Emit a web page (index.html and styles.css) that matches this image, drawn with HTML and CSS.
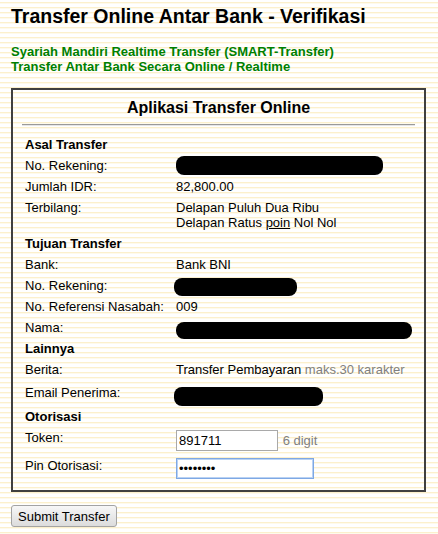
FILE: index.html
```html
<!DOCTYPE html>
<html>
<head>
<meta charset="utf-8">
<title>Transfer Online Antar Bank - Verifikasi</title>
<link rel="stylesheet" href="styles.css">
</head>
<body>
<h1 class="title">Transfer Online Antar Bank - Verifikasi</h1>
<p class="subtitle">Syariah Mandiri Realtime Transfer (SMART-Transfer)<br>Transfer Antar Bank Secara Online / Realtime</p>
<div class="panel">
  <h2 class="panel-title">Aplikasi Transfer Online</h2>
  <hr class="rule">
  <table class="form">
    <tr><td colspan="2" class="section">Asal Transfer</td></tr>
    <tr><td class="label">No. Rekening:</td><td class="value"><span class="redact r1"></span></td></tr>
    <tr><td class="label">Jumlah IDR:</td><td class="value">82,800.00</td></tr>
    <tr><td class="label">Terbilang:</td><td class="value">Delapan Puluh Dua Ribu<br>Delapan Ratus <u>poin</u> Nol Nol</td></tr>
    <tr><td colspan="2" class="section">Tujuan Transfer</td></tr>
    <tr><td class="label">Bank:</td><td class="value">Bank BNI</td></tr>
    <tr><td class="label">No. Rekening:</td><td class="value"><span class="redact r2"></span></td></tr>
    <tr><td class="label">No. Referensi Nasabah:</td><td class="value">009</td></tr>
    <tr><td class="label">Nama:</td><td class="value"><span class="redact r3"></span></td></tr>
    <tr><td colspan="2" class="section">Lainnya</td></tr>
    <tr><td class="label">Berita:</td><td class="value">Transfer Pembayaran <span class="hint">maks.30 karakter</span></td></tr>
    <tr class="email-row"><td class="label">Email Penerima:</td><td class="value"><span class="redact r4"></span></td></tr>
    <tr><td colspan="2" class="section">Otorisasi</td></tr>
    <tr class="input-row"><td class="label">Token:</td><td class="value"><input class="field token" type="text" value="891711"> <span class="hint field-hint">6 digit</span></td></tr>
    <tr class="input-row"><td class="label">Pin Otorisasi:</td><td class="value"><input class="field pin" type="password" value="12345678"></td></tr>
  </table>
</div>
<button class="submit" type="button">Submit Transfer</button>
</body>
</html>
```

FILE: styles.css
```css
html, body {
  margin: 0;
}
body {
  padding: 6px 12px 0 11px;
  font-family: "Liberation Sans", Arial, sans-serif;
  color: #000;
  background-color: #fff;
  background-image: repeating-linear-gradient(to bottom,
    #ffffff 0px, #ffffff 2px,
    #fcf0cc 2px, #fcf0cc 3px,
    #fefaec 3px, #fefaec 4px,
    #ffffff 4px, #ffffff 5px);
  min-height: 534px;
  box-sizing: border-box;
}
.title {
  margin: 0;
  font-size: 19.5px;
  line-height: 21px;
  font-weight: bold;
}
.subtitle {
  margin: 17px 0 0;
  font-size: 13px;
  line-height: 15px;
  font-weight: bold;
  color: #008000;
}
.panel {
  margin-top: 14px;
  border: 2px solid #404040;
  padding: 9px 9px 7px;
}
.panel-title {
  margin: 0;
  text-align: center;
  font-size: 16px;
  line-height: 18px;
  font-weight: bold;
}
.rule {
  margin: 7px 0 0;
  height: 0;
  border: 0;
  border-top: 1px solid #9a9a9a;
  border-bottom: 1px solid #e6e6e6;
}
.form {
  margin-top: 8px;
  border-collapse: collapse;
  font-size: 13px;
  line-height: 15px;
}
.form td {
  padding: 3px;
  vertical-align: top;
}
.form .label {
  width: 145px;
}
.form .section {
  font-weight: bold;
}
.hint {
  color: #808080;
}
.redact {
  display: block;
  background: #000;
  border-radius: 8px;
}
.r1 {
  width: 207px;
  height: 19px;
  margin: -2px 0 -2px 0;
}
.r2 {
  width: 123px;
  height: 18px;
  margin: 0 0 -3px -2px;
}
.r3 {
  width: 236px;
  height: 17px;
  margin: 1.5px 0 -3.5px 0;
}
.r4 {
  width: 149px;
  height: 19px;
  margin: 1.5px 0 -3.5px -2px;
}
.email-row td {
  padding-top: 5px;
  padding-bottom: 4px;
}
.input-row td {
  padding-bottom: 4px;
}
.field {
  box-sizing: border-box;
  height: 21px;
  margin: 0;
  padding: 1px 2px;
  font-family: "Liberation Sans", Arial, sans-serif;
  font-size: 13px;
  color: #000;
  background: #fff;
  border: 1px solid #a9a9a9;
  vertical-align: top;
}
.token {
  width: 102px;
}
.pin {
  width: 138px;
  border-color: #7ea8e4;
  box-shadow: inset 0 0 0 1px #b9d2f3;
  outline: none;
}
.field-hint {
  display: inline-block;
  margin-left: 1px;
  line-height: 21px;
}
.submit {
  display: block;
  margin-top: 13px;
  height: 22px;
  padding: 1px 6px;
  font-family: "Liberation Sans", Arial, sans-serif;
  font-size: 13px;
  line-height: 15px;
  color: #000;
  border: 1px solid #a3a3a3;
  border-radius: 3px;
  background: linear-gradient(to bottom, #f7f7f7, #dcdcdc);
}
```
